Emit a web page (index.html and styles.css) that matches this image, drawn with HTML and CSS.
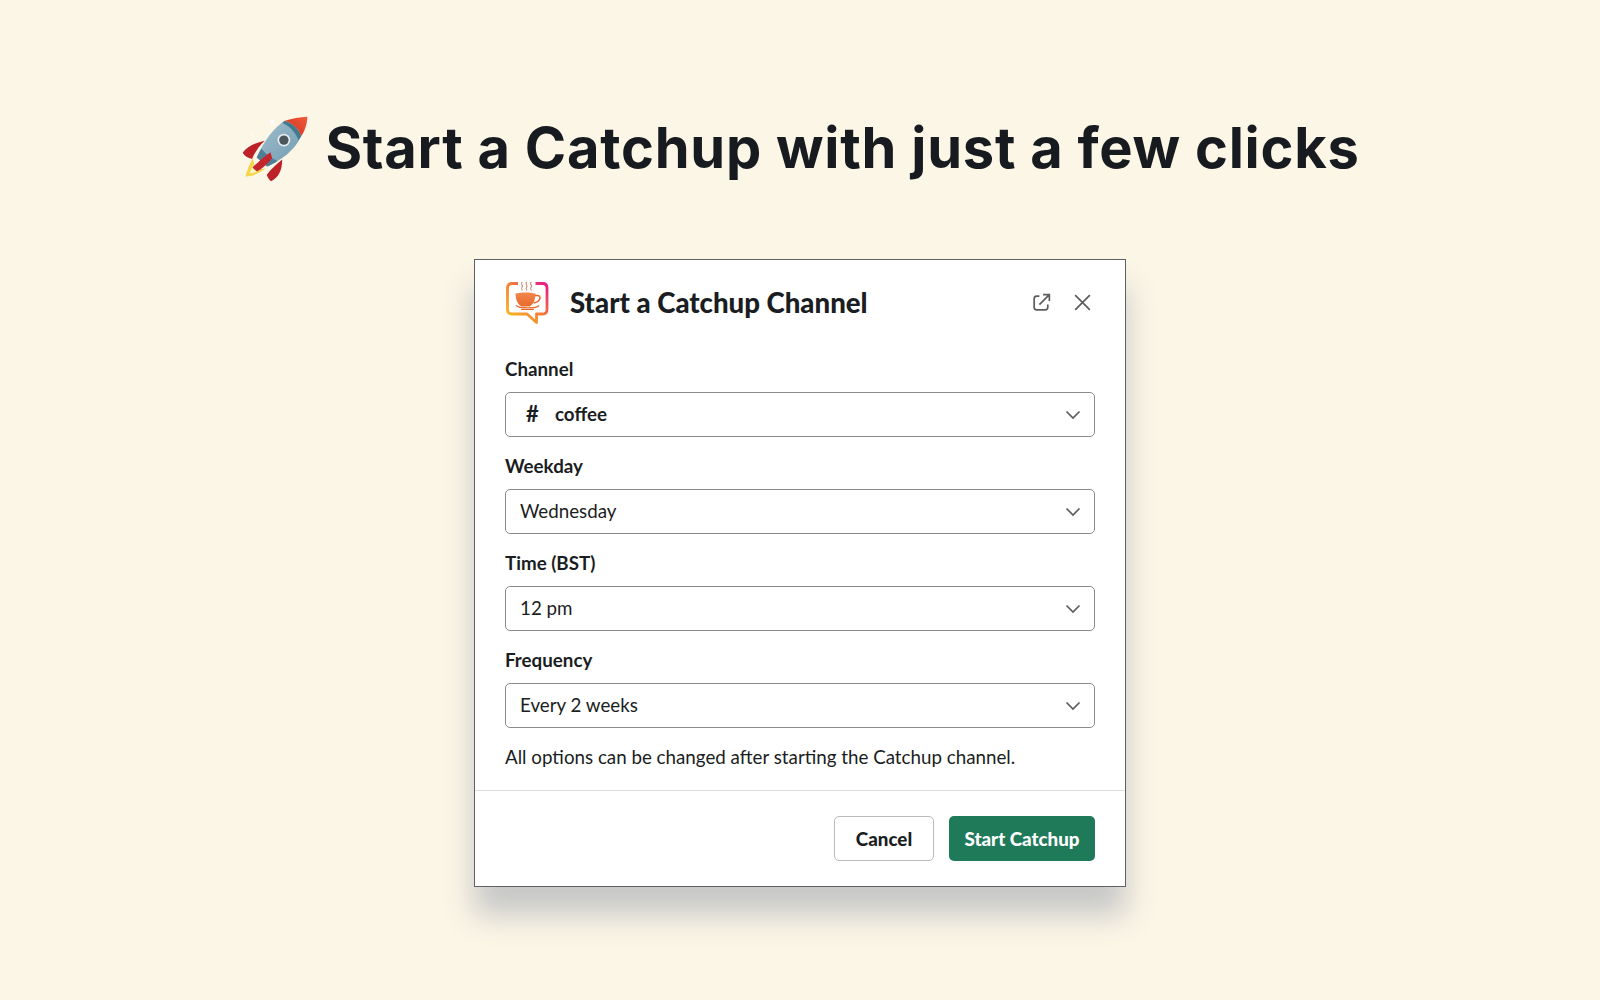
FILE: index.html
```html
<!DOCTYPE html>
<html lang="en">
<head>
    <meta charset="UTF-8">
    <meta name="viewport" content="width=device-width, initial-scale=1.0">
    <title>Start a Catchup</title>
    <link rel="stylesheet" href="styles.css">
</head>
<body>
    <div class="container">
        <h1 class="headline">
            <svg class="rocket" viewBox="40 50 200 200" aria-hidden="true">
                <defs>
                    <linearGradient id="noseGrad" x1="0" y1="1" x2="1" y2="0">
                        <stop offset="0" stop-color="#d2301f"/>
                        <stop offset="1" stop-color="#ee5a3a"/>
                    </linearGradient>
                    <linearGradient id="bodyGrad" x1="0" y1="0" x2="1" y2="1">
                        <stop offset="0" stop-color="#a3bfce"/>
                        <stop offset="1" stop-color="#6f9bb0"/>
                    </linearGradient>
                </defs>
                <circle cx="130" cy="68" r="7" fill="#fff" opacity="0.7"/>
                <circle cx="68" cy="105" r="4" fill="#fff" opacity="0.5"/>
                <path d="M72 176C62 195 54 215 50 231c18-1 42-8 60-24-12 2-26 4-30 2-2-6-4-20-8-33z" fill="#f4d648"/>
                <path d="M73 196c-4 9-8 18-10 26 9-1 21-5 30-11-6 1-13 2-16 0-1-4-2-9-4-15z" fill="#fdf3c6"/>
                <path d="M108 124C80 130 55 140 42 160c5 10 16 16 28 18 8-18 20-38 38-54z" fill="#bd2228"/>
                <path d="M160 180c-14 12-34 28-46 45 3 9 8 16 13 20 20-10 33-30 33-65z" fill="#bd2228"/>
                <path d="M168 64C136 84 104 125 84 174l31 27c42-18 84-50 102-91-8-22-25-38-49-46z" fill="url(#bodyGrad)"/>
                <path d="M84 174l31 27c11-5 21-10 31-17-16-6-36-21-48-37-5 9-10 18-14 27z" fill="#4f7f94"/>
                <path d="M160 70c24 11 40 29 49 52l8-12c-8-22-25-38-49-46z" fill="#3f7a8e"/>
                <path d="M235 52c-22 1-46 5-67 12 24 8 41 24 49 46 11-17 18-38 18-58z" fill="url(#noseGrad)"/>
                <path d="M125 158c-18 12-36 28-54 46l14 12c16-10 32-24 45-40z" fill="#c3262b"/>
                <circle cx="165" cy="122" r="19" fill="#e6edf0"/>
                <circle cx="165" cy="122" r="14" fill="#4b555c"/>
            </svg>
            <span class="headline-text">Start a Catchup with just a few clicks</span>
        </h1>

        <div class="modal">
            <div class="modal-header">
                <svg class="app-logo" viewBox="0 0 44 44" aria-hidden="true">
                    <defs>
                        <linearGradient id="logoGrad" x1="0" y1="1" x2="1" y2="0">
                            <stop offset="0" stop-color="#f9c21c"/>
                            <stop offset="0.55" stop-color="#f47a3a"/>
                            <stop offset="1" stop-color="#e8178a"/>
                        </linearGradient>
                        <linearGradient id="cupGrad" x1="0" y1="0" x2="0" y2="1">
                            <stop offset="0" stop-color="#f0874e"/>
                            <stop offset="1" stop-color="#ea6a2c"/>
                        </linearGradient>
                    </defs>
                    <path d="M12 3.500H6C3 3.500 1.500 5.500 1.500 8v21.500c0 2.500 1.500 4.500 4.500 4.500h15l9.500 8.500V34h6c3 0 4.500-2 4.500-4.500V8c0-2.500-1.500-4.500-4.500-4.500h-7" fill="none" stroke="url(#logoGrad)" stroke-width="2.800" stroke-linejoin="round"/>
                    <path d="M16 2c-1.500 2 1.500 3.500 0 5.500s1.500 2 0 3M20.500 2c-1.500 2 1.500 3.500 0 5.500s1.500 2 0 3M25 2c-1.500 2 1.500 3.500 0 5.500s1.500 2 0 3" fill="none" stroke="#c0704a" stroke-width="1"/>
                    <path d="M9.500 13.500c6-1.500 14-1.500 20 0 0 6-2 11-6 13h-8c-4-2-6-7-6-13z" fill="url(#cupGrad)"/>
                    <path d="M29 15.500h2.500c4 0 3.500 6-4 7.500" fill="none" stroke="#ea6a2c" stroke-width="1.500"/>
                    <path d="M10 25.500c3 3 20 3.500 23 0" fill="none" stroke="#ea6a2c" stroke-width="1.200"/>
                    <path d="M15 29.500h13" stroke="#ea6a2c" stroke-width="1"/>
                </svg>
                <h2 class="modal-title">Start a Catchup Channel</h2>
                <div class="header-actions">
                    <svg class="header-icon" viewBox="0 0 20 20" aria-hidden="true">
                        <path d="M8 4H5.500A2.500 2.500 0 0 0 3 6.500v8A2.500 2.500 0 0 0 5.500 17h8a2.500 2.500 0 0 0 2.500-2.500V12M8 12l9-9M11.500 2.500h6v6"/>
                    </svg>
                    <svg class="header-icon" viewBox="0 0 20 20" aria-hidden="true">
                        <path d="M3 3l14 14M17 3L3 17"/>
                    </svg>
                </div>
            </div>

            <div class="form-body">
                <div class="form-group">
                    <div class="field-label">Channel</div>
                    <div class="select-box">
                        <span class="hash">#</span>
                        <span class="channel-name">coffee</span>
                        <svg class="chevron" viewBox="0 0 16 10" aria-hidden="true"><path d="M1.500 1.500 8 8l6.500-6.500"/></svg>
                    </div>
                </div>
                <div class="form-group">
                    <div class="field-label">Weekday</div>
                    <div class="select-box">
                        <span>Wednesday</span>
                        <svg class="chevron" viewBox="0 0 16 10" aria-hidden="true"><path d="M1.500 1.500 8 8l6.500-6.500"/></svg>
                    </div>
                </div>
                <div class="form-group">
                    <div class="field-label">Time (BST)</div>
                    <div class="select-box">
                        <span>12 pm</span>
                        <svg class="chevron" viewBox="0 0 16 10" aria-hidden="true"><path d="M1.500 1.500 8 8l6.500-6.500"/></svg>
                    </div>
                </div>
                <div class="form-group">
                    <div class="field-label">Frequency</div>
                    <div class="select-box">
                        <span>Every 2 weeks</span>
                        <svg class="chevron" viewBox="0 0 16 10" aria-hidden="true"><path d="M1.500 1.500 8 8l6.500-6.500"/></svg>
                    </div>
                </div>
                <p class="form-note">All options can be changed after starting the Catchup channel.</p>
            </div>

            <div class="modal-footer">
                <button class="btn btn-cancel">Cancel</button>
                <button class="btn btn-start">Start Catchup</button>
            </div>
        </div>
    </div>
</body>
</html>
```

FILE: styles.css
```css
* {
    margin: 0;
    padding: 0;
    box-sizing: border-box;
}
body {
    background-color: #fcf6e7;
    color: #1a1d21;
    font-family: "Lato", "Liberation Sans", sans-serif;
}
.container {
    height: 1000px;
    display: flex;
    flex-direction: column;
    align-items: center;
    padding-top: 110px;
}
.headline {
    display: flex;
    align-items: center;
    gap: 16px;
    height: 74px;
    margin-left: 2px;
    font-family: "Inter", "Liberation Sans", sans-serif;
    font-size: 56px;
    font-weight: 700;
    letter-spacing: 0.750px;
    color: #171b20;
}
.headline-text {
    padding-top: 2px;
}
.rocket {
    width: 67px;
    height: 67px;
    margin-top: 5px;
}
.modal {
    width: 652px;
    height: 628px;
    margin-top: 75px;
    background-color: #fff;
    border: 1px solid #5f6062;
    box-shadow: 0 28px 28px rgba(44, 64, 108, 0.25);
    display: flex;
    flex-direction: column;
}
.modal-header {
    height: 84px;
    padding: 0 30px;
    display: flex;
    align-items: center;
}
.app-logo {
    width: 44px;
    height: 44px;
    flex-shrink: 0;
    margin-left: 1px;
}
.modal-title {
    font-size: 27.600px;
    font-weight: 900;
    margin-left: 20px;
    flex: 1;
}
.header-actions {
    display: flex;
    gap: 20px;
    align-items: center;
    margin-right: 2px;
}
.header-icon {
    width: 21px;
    height: 21px;
    fill: none;
    stroke: #5c5d60;
    stroke-width: 1.600;
}
.form-body {
    padding: 12px 30px 0;
    flex: 1;
}
.form-group {
    margin-bottom: 16px;
}
.field-label {
    height: 28px;
    margin-bottom: 8px;
    font-size: 18.750px;
    font-weight: 700;
    line-height: 26px;
}
.select-box {
    height: 45px;
    padding: 0 14px 2px;
    border: 1px solid #8a8b8d;
    border-radius: 5px;
    display: flex;
    align-items: center;
    font-size: 18.750px;
}
.select-box .chevron {
    margin-left: auto;
    margin-right: -1px;
    margin-top: 2px;
}
.hash {
    width: 29px;
    margin-left: 6px;
    font-weight: 700;
    font-size: 22px;
}
.channel-name {
    font-weight: 700;
}
.chevron {
    width: 16px;
    height: 10px;
    fill: none;
    stroke: #5c5d60;
    stroke-width: 1.700;
}
.form-note {
    font-size: 18.750px;
    line-height: 26px;
    margin-top: 2px;
}
.modal-footer {
    height: 96px;
    padding: 25px 30px 0;
    border-top: 1px solid #dedede;
    display: flex;
    justify-content: flex-end;
    gap: 15px;
}
.btn {
    height: 45px;
    border-radius: 5px;
    font-family: "Lato", "Liberation Sans", sans-serif;
    font-size: 18.750px;
    font-weight: 900;
}
.btn-cancel {
    width: 100px;
    background-color: #fff;
    color: #1a1d21;
    border: 1px solid #bcbcbc;
}
.btn-start {
    width: 146px;
    background-color: #1f7a5a;
    color: #fff;
    border: none;
}
```
